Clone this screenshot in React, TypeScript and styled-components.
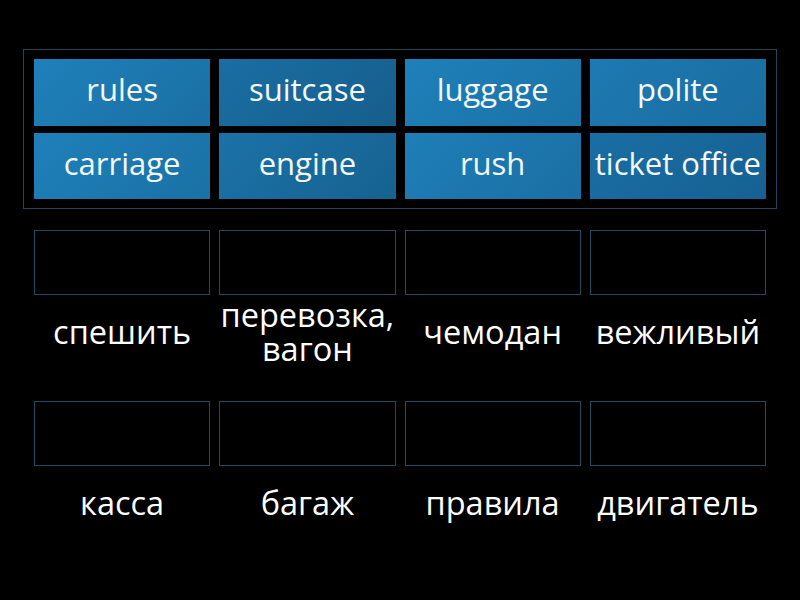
import React from "react";
import styled, { createGlobalStyle } from "styled-components";

const Global = createGlobalStyle`
  html, body { margin: 0; padding: 0; background: #000; }
  body { font-family: "Open Sans", "Liberation Sans", sans-serif; }
`;

const Page = styled.div`
  width: 800px;
  height: 600px;
  background: #000;
  box-sizing: border-box;
  padding: 49px 0 0 23px;
  overflow: hidden;
`;

const Bank = styled.div`
  width: 754px;
  box-sizing: border-box;
  border: 1px solid #244559;
  padding: 9px 10px;
  display: grid;
  grid-template-columns: repeat(4, 1fr);
  grid-template-rows: 67px 66px;
  column-gap: 9px;
  row-gap: 7px;
`;

const Tile = styled.div<{ $c1: string; $c2: string }>`
  display: flex;
  align-items: center;
  justify-content: center;
  background: linear-gradient(135deg, ${(p) => p.$c1}, ${(p) => p.$c2});
  color: #f4f8fb;
  font-size: 31px;
  line-height: 1;
  padding-bottom: 6px;
  box-sizing: border-box;
  white-space: nowrap;
`;

const Targets = styled.div`
  margin: 21px 0 0 11px;
  width: 732px;
  display: grid;
  grid-template-columns: repeat(4, 1fr);
  column-gap: 9px;
  row-gap: 30px;
`;

const Cell = styled.div`
  display: flex;
  flex-direction: column;
`;

const DropBox = styled.div`
  height: 65px;
  box-sizing: border-box;
  border: 1px solid #1f4a60;
`;

const Label = styled.div`
  height: 76px;
  display: flex;
  align-items: center;
  justify-content: center;
  text-align: center;
  color: #fff;
  font-size: 32.5px;
  line-height: 34px;
  padding-bottom: 2px;
  box-sizing: border-box;
  white-space: nowrap;
`;

const tiles: [string, string, string][] = [
  ["rules", "#1f80ba", "#1a6fa3"],
  ["suitcase", "#1a6ea3", "#165e8c"],
  ["luggage", "#1f80ba", "#1a72a6"],
  ["polite", "#1e7ab3", "#196c9f"],
  ["carriage", "#1f80ba", "#1a71a5"],
  ["engine", "#1b72a7", "#166290"],
  ["rush", "#1f7eb8", "#1a6fa3"],
  ["ticket office", "#1a6ea3", "#166193"],
];

const labels = [
  "спешить",
  "перевозка,\nвагон",
  "чемодан",
  "вежливый",
  "касса",
  "багаж",
  "правила",
  "двигатель",
];

export default function App() {
  return (
    <>
      <Global />
      <Page>
        <Bank>
          {tiles.map(([t, a, b]) => (
            <Tile key={t} $c1={a} $c2={b}>
              {t}
            </Tile>
          ))}
        </Bank>
        <Targets>
          {labels.map((l) => (
            <Cell key={l}>
              <DropBox />
              <Label>
                <span>
                  {l.split("\n").map((line, i) => (
                    <React.Fragment key={i}>
                      {i > 0 && <br />}
                      {line}
                    </React.Fragment>
                  ))}
                </span>
              </Label>
            </Cell>
          ))}
        </Targets>
      </Page>
    </>
  );
}
